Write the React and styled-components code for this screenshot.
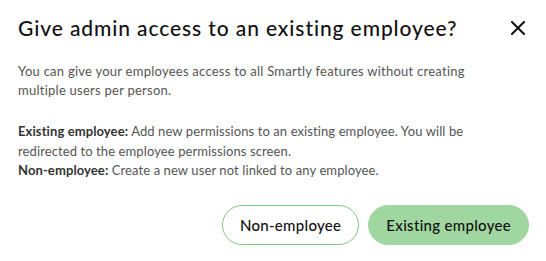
import styled, { createGlobalStyle } from "styled-components";

const GlobalStyle = createGlobalStyle`
  html, body {
    margin: 0;
    padding: 0;
    background: #ffffff;
  }
  body {
    font-family: Lato, "Open Sans", sans-serif;
  }
`;

export default function App() {
  return (
    <>
      <GlobalStyle />
      <Dialog>
        <Header>
          <Title>Give admin access to an existing employee?</Title>
          <CloseButton aria-label="Close">
            <svg width="14" height="14" viewBox="0 0 14 14">
              <path
                d="M1 1 L13 13 M13 1 L1 13"
                stroke="#111"
                strokeWidth="2"
                strokeLinecap="square"
              />
            </svg>
          </CloseButton>
        </Header>
        <Intro>
          You can give your employees access to all Smartly features without
          creating multiple users per person.
        </Intro>
        <Details>
          <Line>
            <Label>Existing employee:</Label> Add new permissions to an existing
            employee. You will be redirected to the employee permissions screen.
          </Line>
          <Line>
            <Label>Non-employee:</Label> Create a new user not linked to any
            employee.
          </Line>
        </Details>
        <Actions>
          <Button>Non-employee</Button>
          <Button primary>Existing employee</Button>
        </Actions>
      </Dialog>
    </>
  );
}

const Dialog = styled.div`
  width: 546px;
  height: 261px;
  box-sizing: border-box;
  padding: 14px 17px 16px 18px;
  display: flex;
  flex-direction: column;
`;

const Header = styled.div`
  display: flex;
  justify-content: space-between;
  align-items: center;
`;

const Title = styled.h1`
  margin: 0;
  font-size: 21px;
  line-height: 28px;
  font-weight: 500;
  color: #111;
  letter-spacing: 0.9px;
`;

const CloseButton = styled.button`
  border: none;
  background: none;
  padding: 0;
  margin-right: 4px;
  display: flex;
  cursor: pointer;
`;

const Intro = styled.p`
  margin: 20px 0 0 0;
  font-size: 13px;
  line-height: 19px;
  color: #555;
  letter-spacing: 0.25px;
  max-width: 480px;
`;

const Details = styled.div`
  margin-top: 22px;
  display: flex;
  flex-direction: column;
`;

const Line = styled.p`
  margin: 0;
  font-size: 13px;
  line-height: 19.5px;
  color: #555;
  letter-spacing: 0.1px;
  max-width: 480px;
`;

const Label = styled.span`
  font-weight: 700;
  color: #333;
`;

const Actions = styled.div`
  margin-top: auto;
  display: flex;
  justify-content: flex-end;
  gap: 9px;
`;

const Button = styled.button`
  height: 40px;
  border-radius: 20px;
  padding: 0 17px;
  font-family: Lato, "Open Sans", sans-serif;
  font-size: 15px;
  font-weight: 500;
  letter-spacing: 0.3px;
  color: #111;
  cursor: pointer;
  border: 1px solid ${({ primary }) => (primary ? "#a0d6a0" : "#7fc585")};
  background: ${({ primary }) => (primary ? "#a0d6a0" : "#ffffff")};
`;
